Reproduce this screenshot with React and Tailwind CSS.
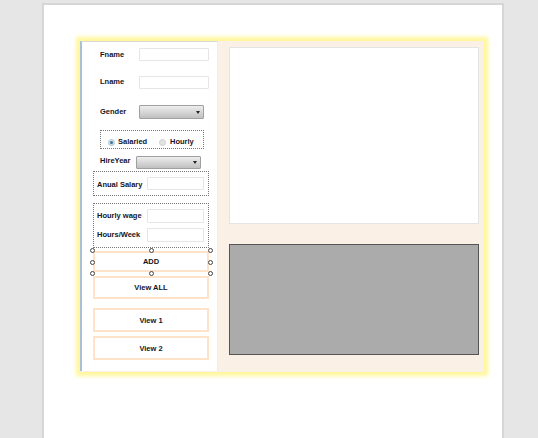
const font = { fontFamily: '"Liberation Sans", Arial, sans-serif' };

function Label({ children, className = "" }) {
  return <span className={`text-[7.5px] font-bold leading-none text-[#14141f] whitespace-nowrap ${className}`}>{children}</span>;
}

function Input({ className = "" }) {
  return <div className={`bg-white border border-[#e6e6ea] rounded-[1px] ${className}`} />;
}

function Select({ className = "" }) {
  return (
    <div className={`flex items-center justify-end pr-[3px] rounded-[1px] border border-[#a0a0a0] bg-gradient-to-b from-[#eeeeee] to-[#c0c0c0] ${className}`}>
      <svg width="4" height="3" viewBox="0 0 4 3"><path d="M0 0h4L2 3z" fill="#222" /></svg>
    </div>
  );
}

function Radio({ checked }) {
  return (
    <span className={`flex items-center justify-center w-[7px] h-[7px] rounded-full border ${checked ? "border-[#b4c8d4] bg-[#cfdde6]" : "border-[#d0d0d0] bg-[#e2e2e2]"}`}>
      {checked && <span className="w-[3px] h-[3px] rounded-full bg-[#3a789a]" />}
    </span>
  );
}

function Btn({ children, className = "" }) {
  return (
    <div className={`ml-[11px] w-[116px] flex items-center justify-center bg-white border-2 border-[#ffe2c8] ${className}`}>
      <Label>{children}</Label>
    </div>
  );
}

function Handle({ className }) {
  return <span className={`absolute w-[5px] h-[5px] rounded-full bg-white border border-[#444] ${className}`} />;
}

export default function App() {
  return (
    <div className="w-[538px] h-[438px] bg-[#e6e6e6] overflow-hidden" style={font}>
      <div className="ml-[42px] mt-[3px] w-[462px] h-[435px] bg-white border-2 border-b-0 border-[#d6d6d6] pl-[36px] pt-[36px]">
        <div className="flex w-[404px] h-[331px] bg-[#faf0e6] shadow-[0_0_4px_4px_#fff799]">
          {/* left form panel */}
          <div className="flex flex-col w-[138px] h-[330px] bg-white border-l-2 border-l-[#a9bfd6] border-t border-t-[#d8d8d8] border-r border-r-[#eeeeee]">
            <div className="flex items-center h-[13px] mt-[6px]">
              <Label className="ml-[18px] w-[39px]">Fname</Label>
              <Input className="w-[70px] h-[13px]" />
            </div>
            <div className="flex items-center h-[13px] mt-[15px]">
              <Label className="ml-[18px] w-[39px] -translate-y-[1px]">Lname</Label>
              <Input className="w-[70px] h-[13px]" />
            </div>
            <div className="flex items-center h-[14px] mt-[16px]">
              <Label className="ml-[18px] w-[39px]">Gender</Label>
              <Select className="w-[65px] h-[14px]" />
            </div>
            <div className="flex items-center ml-[18px] w-[104px] h-[19px] mt-[11px] pt-[5px] pl-[7px] border border-dotted border-[#777]">
              <Radio checked />
              <Label className="ml-[3px] w-[41px]">Salaried</Label>
              <Radio />
              <Label className="ml-[4px]">Hourly</Label>
            </div>
            <div className="flex items-center h-[13px] mt-[7px]">
              <Label className="ml-[18px] w-[36px] -translate-y-[2px]">HireYear</Label>
              <Select className="w-[65px] h-[13px]" />
            </div>
            <div className="flex items-center ml-[11px] w-[116px] h-[25px] mt-[2px] pl-[3px] border border-dotted border-[#777]">
              <Label className="w-[50px] translate-y-[1px]">Anual Salary</Label>
              <Input className="w-[57px] h-[13px]" />
            </div>
            <div className="flex flex-col justify-center gap-[5px] ml-[11px] w-[116px] h-[45px] mt-[7px] pl-[3px] border border-dotted border-[#777]">
              <div className="flex items-center">
                <Label className="w-[50px]">Hourly wage</Label>
                <Input className="w-[57px] h-[14px]" />
              </div>
              <div className="flex items-center">
                <Label className="w-[50px]">Hours/Week</Label>
                <Input className="w-[57px] h-[14px]" />
              </div>
            </div>
            <div className="relative mt-[3px]">
              <Btn className="h-[21px]">ADD</Btn>
              <Handle className="left-[8px] -top-[3px]" />
              <Handle className="left-[67px] -top-[3px]" />
              <Handle className="left-[126px] -top-[3px]" />
              <Handle className="left-[8px] top-[9px]" />
              <Handle className="left-[126px] top-[9px]" />
              <Handle className="left-[8px] top-[20px]" />
              <Handle className="left-[67px] top-[20px]" />
              <Handle className="left-[126px] top-[20px]" />
            </div>
            <Btn className="h-[23px] mt-[4px]">View ALL</Btn>
            <Btn className="h-[24px] mt-[9px] pt-[1px]">View 1</Btn>
            <Btn className="h-[24px] mt-[4px] pt-[1px]">View 2</Btn>
          </div>
          {/* right side */}
          <div className="flex flex-col ml-[11px] mt-[6px] w-[250px]">
            <div className="h-[177px] bg-white border border-[#e4e4e4]" />
            <div className="h-[111px] mt-[20px] bg-[#ababab] border border-[#555555]" />
          </div>
        </div>
      </div>
    </div>
  );
}
